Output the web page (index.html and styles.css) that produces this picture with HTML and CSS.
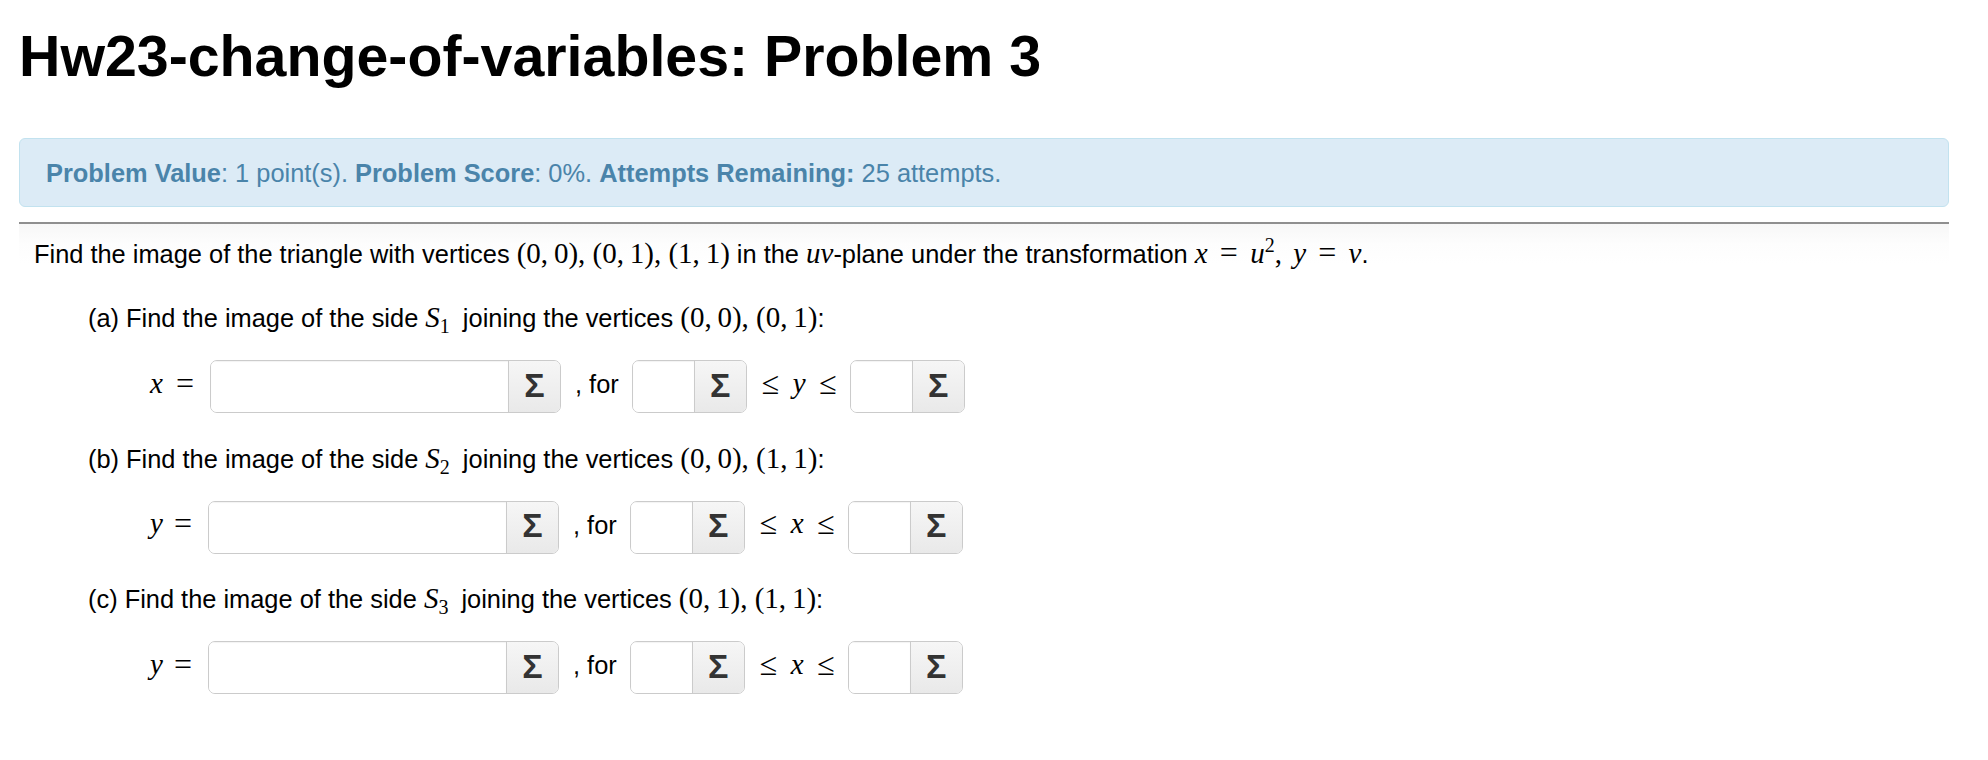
FILE: index.html
```html
<!DOCTYPE html>
<html lang="en">
<head>
<meta charset="utf-8">
<title>Hw23-change-of-variables: Problem 3</title>
<link rel="stylesheet" href="styles.css">
</head>
<body>
<div class="page">
  <h1 class="title">Hw23-change-of-variables: Problem 3</h1>

  <div class="alert"><b>Problem Value</b>: 1 point(s). <b>Problem Score</b>: 0%. <b>Attempts Remaining:</b> 25 attempts.</div>

  <div class="problem">
    <p class="intro">Find the image of the triangle with vertices <span class="m">(0,&thinsp;0), (0,&thinsp;1), (1,&thinsp;1)</span> in the <span class="m"><i>uv</i></span>-plane under the transformation <span class="m"><i>x</i> <span class="eq">=</span> <i>u</i><sup>2</sup><span class="cm">,</span> <i>y</i> <span class="eq">=</span> <i>v</i></span>.</p>

    <div class="part">
      <p>(a) Find the image of the side <span class="m"><i>S</i><sub>1</sub></span> joining the vertices <span class="m">(0,&thinsp;0), (0,&thinsp;1)</span>:</p>
      <div class="row">
        <span class="lbl"><i>x</i><span>=</span></span>
        <span class="ans wide"><input class="field" type="text"><span class="btn">Σ</span></span>
        <span class="for">, for</span>
        <span class="ans small"><input class="field" type="text"><span class="btn">Σ</span></span>
        <span class="rng"><span>≤</span><i>y</i><span>≤</span></span>
        <span class="ans small"><input class="field" type="text"><span class="btn">Σ</span></span>
      </div>
    </div>

    <div class="part">
      <p>(b) Find the image of the side <span class="m"><i>S</i><sub>2</sub></span> joining the vertices <span class="m">(0,&thinsp;0), (1,&thinsp;1)</span>:</p>
      <div class="row">
        <span class="lbl narrow"><i>y</i><span>=</span></span>
        <span class="ans wide"><input class="field" type="text"><span class="btn">Σ</span></span>
        <span class="for">, for</span>
        <span class="ans small"><input class="field" type="text"><span class="btn">Σ</span></span>
        <span class="rng"><span>≤</span><i>x</i><span>≤</span></span>
        <span class="ans small"><input class="field" type="text"><span class="btn">Σ</span></span>
      </div>
    </div>

    <div class="part">
      <p>(c) Find the image of the side <span class="m"><i>S</i><sub>3</sub></span> joining the vertices <span class="m">(0,&thinsp;1), (1,&thinsp;1)</span>:</p>
      <div class="row">
        <span class="lbl narrow"><i>y</i><span>=</span></span>
        <span class="ans wide"><input class="field" type="text"><span class="btn">Σ</span></span>
        <span class="for">, for</span>
        <span class="ans small"><input class="field" type="text"><span class="btn">Σ</span></span>
        <span class="rng"><span>≤</span><i>x</i><span>≤</span></span>
        <span class="ans small"><input class="field" type="text"><span class="btn">Σ</span></span>
      </div>
    </div>
  </div>
</div>
</body>
</html>
```

FILE: styles.css
```css
* { box-sizing: border-box; }

body {
  margin: 0;
  background: #fff;
  color: #000;
  font-family: "Liberation Sans", Arial, Helvetica, sans-serif;
  font-size: 25.4px;
}

.page {
  padding: 25px 39px 40px 19px;
}

.title {
  margin: 0;
  font-size: 57.3px;
  font-weight: bold;
  line-height: 62px;
}

.alert {
  margin-top: 51px;
  background: #dcebf6;
  border: 1px solid #c2e2ef;
  border-radius: 6px;
  color: #4a84aa;
  padding: 17px 26px 15px;
  line-height: 35px;
}

.alert b { font-weight: bold; }

.problem {
  margin-top: 15px;
  border-top: 2px solid #8f8f8f;
  padding: 12px 15px 0;
  background: linear-gradient(#f7f7f7, #fdfdfd 20px, #fff 40px);
}

p {
  margin: 0;
  height: 35px;
  line-height: 35px;
}

.m {
  font-family: "Liberation Serif", "Times New Roman", serif;
  font-size: 29px;
  line-height: 1;
}

.m .eq {
  font-size: 32px;
  padding: 0 5px;
}

.m .cm {
  margin-right: 4px;
}

.m sup, .m sub {
  font-size: 20px;
  line-height: 0;
}

.m sub {
  vertical-align: -6px;
  margin-right: 6px;
}

.part {
  margin: 30px 0 0 54px;
}

.part + .part {
  margin-top: 28.5px;
}

.row {
  display: flex;
  align-items: center;
  height: 53px;
  margin: 24px 0 0 62px;
}

.lbl, .rng {
  display: flex;
  justify-content: space-between;
  font-family: "Liberation Serif", "Times New Roman", serif;
  font-size: 29px;
  line-height: 35px;
  margin-bottom: 7px;
}

.lbl {
  width: 44px;
  margin-right: 16px;
}

.lbl.narrow { width: 42px; }

.lbl span, .rng span { font-size: 32px; }

.rng {
  width: 75px;
  margin-left: 15px;
  margin-right: 13px;
}

.for {
  line-height: 35px;
  margin: 0 13px 4px 14px;
}

.ans {
  display: flex;
  height: 53px;
  border: 1px solid #cbcbcb;
  border-radius: 7px;
  overflow: hidden;
  background: #fff;
}

.ans.wide { width: 351px; }
.ans.small { width: 115px; }

.field {
  flex: 1;
  min-width: 0;
  border: 0;
  margin: 0;
  padding: 0 10px;
  background: #fff;
  box-shadow: inset 0 1px 1px rgba(0, 0, 0, 0.05);
  font: inherit;
  outline: none;
}

.btn {
  width: 52px;
  flex: none;
  display: flex;
  align-items: center;
  justify-content: center;
  padding-bottom: 4px;
  border-left: 1px solid #cbcbcb;
  background: linear-gradient(#f6f6f6, #e9e9e9);
  color: #333;
  font-family: "Liberation Sans", Arial, sans-serif;
  font-weight: bold;
  font-size: 34px;
  line-height: 1;
}
```
